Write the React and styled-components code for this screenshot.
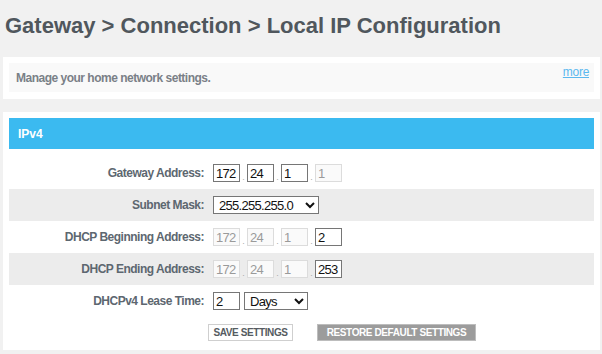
import styled, {createGlobalStyle} from "styled-components";

const Global = createGlobalStyle`
  body {
    margin: 0;
    background-color: #f1f1f1;
    font-family: "Liberation Sans", Arial, sans-serif;
  }
`;

const Page = styled.div`
  width: 602px;
  height: 354px;
  overflow: hidden;
`;

const Title = styled.h1`
  margin: 13px 0 0 5px;
  font-size: 22px;
  line-height: 25px;
  font-weight: bold;
  color: #50575d;
`;

const Panel = styled.div`
  margin: ${props => props.top}px 2px 0 3px;
  background-color: #fff;
  padding: 6px 6px ${props => props.bottom}px 6px;
`;

const Intro = styled.div`
  display: flex;
  justify-content: space-between;
  align-items: flex-start;
  height: 29px;
  background-color: #f9f9f9;
  padding: 0 5px 0 7px;
`;

const IntroText = styled.p`
  margin: 8px 0 0;
  font-size: 12px;
  line-height: 14px;
  font-weight: bold;
  letter-spacing: -0.5px;
  color: #7a8087;
`;

const More = styled.a`
  margin-top: 2px;
  font-size: 12px;
  line-height: 14px;
  color: #5bb8ef;
  text-decoration: underline;
  letter-spacing: -0.3px;
`;

const Header = styled.div`
  height: 31px;
  line-height: 33px;
  padding-left: 9px;
  background-color: #3bbaf0;
  color: #fff;
  font-size: 12px;
  font-weight: bold;
  margin-bottom: 8px;
`;

const Row = styled.div`
  display: grid;
  grid-template-columns: 195px 1fr;
  column-gap: 9px;
  align-items: center;
  height: 32px;
  background-color: ${props => (props.shaded ? "#ececec" : "transparent")};
`;

const Label = styled.label`
  text-align: right;
  font-size: 12px;
  font-weight: bold;
  letter-spacing: -0.5px;
  color: #5d6770;
`;

const Fields = styled.div`
  display: flex;
  align-items: center;
`;

const Octet = styled.input`
  box-sizing: border-box;
  width: 27px;
  height: 18px;
  margin: 0;
  padding: 0 2px;
  border: 1px solid ${props => (props.disabled ? "#dcdcdc" : "#767676")};
  background-color: ${props => (props.disabled ? "#fafafa" : "#fff")};
  color: ${props => (props.disabled ? "#9a9a9a" : "#111")};
  font-family: "Liberation Sans", Arial, sans-serif;
  font-size: 13px;
  letter-spacing: -0.7px;
  border-radius: 0;
  outline: none;
`;

const Dot = styled.span`
  width: 7px;
  align-self: flex-end;
  text-align: center;
  font-size: 9px;
  line-height: 9px;
  color: #aaa;
`;

const Select = styled.select`
  box-sizing: border-box;
  width: ${props => props.width}px;
  height: 18px;
  margin: 0 0 0 ${props => props.gap || 0}px;
  padding: 0 1px;
  border: 1px solid #767676;
  border-radius: 0;
  background-color: #fff;
  color: #111;
  font-family: "Liberation Sans", Arial, sans-serif;
  font-size: 13px;
  letter-spacing: -0.7px;
`;

const Buttons = styled.div`
  display: flex;
  gap: 24px;
  padding-left: 199px;
  margin-top: 7px;
`;

const Button = styled.button`
  box-sizing: border-box;
  width: ${props => props.width}px;
  height: 17px;
  margin: 0;
  padding: 0;
  border: 1px solid ${props => (props.primary ? "#bdbdbd" : "#cfcfcf")};
  background-color: ${props => (props.primary ? "#9c9c9c" : "#fff")};
  color: ${props => (props.primary ? "#fff" : "#555b61")};
  font-family: "Liberation Sans", Arial, sans-serif;
  font-size: 10px;
  font-weight: bold;
  letter-spacing: -0.4px;
`;

function Address({values, enabled}) {
  return (
    <Fields>
      {values.map((v, i) => (
        <>
          {i > 0 && <Dot key={"d" + i}>.</Dot>}
          <Octet key={i} defaultValue={v} disabled={!enabled[i]} />
        </>
      ))}
    </Fields>
  );
}

function App() {
  return (
    <Page>
      <Global />
      <Title>Gateway &gt; Connection &gt; Local IP Configuration</Title>
      <Panel top={19} bottom={7}>
        <Intro>
          <IntroText>Manage your home network settings.</IntroText>
          <More href="#">more</More>
        </Intro>
      </Panel>
      <Panel top={13} bottom={9}>
        <Header>IPv4</Header>
        <Row>
          <Label>Gateway Address:</Label>
          <Address values={["172", "24", "1", "1"]} enabled={[true, true, true, false]} />
        </Row>
        <Row shaded>
          <Label>Subnet Mask:</Label>
          <Fields>
            <Select width={106} defaultValue="255.255.255.0">
              <option>255.255.255.0</option>
              <option>255.255.0.0</option>
              <option>255.0.0.0</option>
            </Select>
          </Fields>
        </Row>
        <Row>
          <Label>DHCP Beginning Address:</Label>
          <Address values={["172", "24", "1", "2"]} enabled={[false, false, false, true]} />
        </Row>
        <Row shaded>
          <Label>DHCP Ending Address:</Label>
          <Address values={["172", "24", "1", "253"]} enabled={[false, false, false, true]} />
        </Row>
        <Row>
          <Label>DHCPv4 Lease Time:</Label>
          <Fields>
            <Octet defaultValue="2" />
            <Select width={64} gap={4} defaultValue="Days">
              <option>Minutes</option>
              <option>Hours</option>
              <option>Days</option>
              <option>Weeks</option>
            </Select>
          </Fields>
        </Row>
        <Buttons>
          <Button width={85}>SAVE SETTINGS</Button>
          <Button width={159} primary>RESTORE DEFAULT SETTINGS</Button>
        </Buttons>
      </Panel>
    </Page>
  );
}

export default App;
